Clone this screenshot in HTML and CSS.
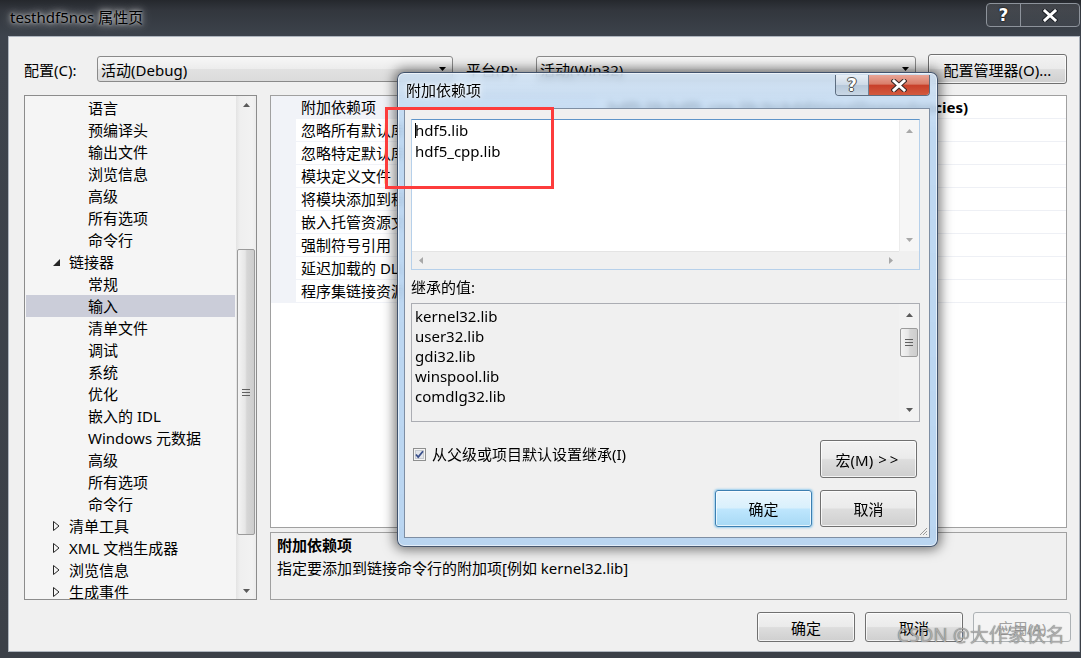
FILE: index.html
```html
<!DOCTYPE html>
<html>
<head>
<meta charset="utf-8">
<link rel="stylesheet" href="styles.css">
</head>
<body>
<div class="win">
  <div class="titlebar">
    <div class="title">testhdf5nos 属性页</div>
    <div class="caps">
      <div class="cap help">?</div>
      <div class="cap close">
        <svg width="16" height="13" viewBox="0 0 16 13"><path d="M3 2 L13 11 M13 2 L3 11" stroke="#1e2228" stroke-width="5" stroke-linecap="square"/><path d="M3 2 L13 11 M13 2 L3 11" stroke="#fff" stroke-width="3" stroke-linecap="square"/></svg>
      </div>
    </div>
  </div>
  <div class="client">
    <div class="cfgrow">
      <span class="lbl">配置(C):</span>
      <div class="combo cfg"><span class="ctext">活动(Debug)</span><svg class="carrow" width="7" height="4" viewBox="0 0 7 4"><path d="M0 0 H7 L3.5 4 Z" fill="#000"/></svg></div>
      <span class="lbl plat">平台(P):</span>
      <div class="combo platc"><span class="ctext">活动(Win32)</span><svg class="carrow" width="7" height="4" viewBox="0 0 7 4"><path d="M0 0 H7 L3.5 4 Z" fill="#000"/></svg></div>
      <div class="btn mgr">配置管理器(O)...</div>
    </div>
    <div class="main">
      <div class="tree">
        <div class="items">
          <div class="item">语言</div>
          <div class="item">预编译头</div>
          <div class="item">输出文件</div>
          <div class="item">浏览信息</div>
          <div class="item">高级</div>
          <div class="item">所有选项</div>
          <div class="item">命令行</div>
          <div class="item parent"><svg class="tri" width="7" height="7" viewBox="0 0 7 7"><path d="M7 0 L7 7 L0 7 Z" fill="#262626"/></svg>链接器</div>
          <div class="item">常规</div>
          <div class="item sel">输入</div>
          <div class="item">清单文件</div>
          <div class="item">调试</div>
          <div class="item">系统</div>
          <div class="item">优化</div>
          <div class="item">嵌入的 IDL</div>
          <div class="item">Windows 元数据</div>
          <div class="item">高级</div>
          <div class="item">所有选项</div>
          <div class="item">命令行</div>
          <div class="item parent"><svg class="tri" width="7" height="10" viewBox="0 0 7 10"><path d="M0.5 0.5 L6 5 L0.5 9.5 Z" fill="none" stroke="#262626"/></svg>清单工具</div>
          <div class="item parent"><svg class="tri" width="7" height="10" viewBox="0 0 7 10"><path d="M0.5 0.5 L6 5 L0.5 9.5 Z" fill="none" stroke="#262626"/></svg>XML 文档生成器</div>
          <div class="item parent"><svg class="tri" width="7" height="10" viewBox="0 0 7 10"><path d="M0.5 0.5 L6 5 L0.5 9.5 Z" fill="none" stroke="#262626"/></svg>浏览信息</div>
          <div class="item parent"><svg class="tri" width="7" height="10" viewBox="0 0 7 10"><path d="M0.5 0.5 L6 5 L0.5 9.5 Z" fill="none" stroke="#262626"/></svg>生成事件</div>
        </div>
        <div class="vs tree-vs">
          <div class="sbb"><svg width="7" height="4" viewBox="0 0 7 4"><path d="M0 4 L3.5 0 L7 4 Z" fill="#5a5a5a"/></svg></div>
          <div class="track">
            <div class="thumb tree-thumb"><span class="grip"></span></div>
          </div>
          <div class="sbb"><svg width="7" height="4" viewBox="0 0 7 4"><path d="M0 0 L7 0 L3.5 4 Z" fill="#5a5a5a"/></svg></div>
        </div>
      </div>
      <div class="right">
        <div class="grid">
          <div class="row first"><span class="m"></span><span class="k">附加依赖项</span><span class="v">hdf5.lib;hdf5_cpp.lib;%(AdditionalDependencies)</span></div>
          <div class="row"><span class="m"></span><span class="k">忽略所有默认库</span><span class="v"></span></div>
          <div class="row"><span class="m"></span><span class="k">忽略特定默认库</span><span class="v"></span></div>
          <div class="row"><span class="m"></span><span class="k">模块定义文件</span><span class="v"></span></div>
          <div class="row"><span class="m"></span><span class="k">将模块添加到程序集</span><span class="v"></span></div>
          <div class="row"><span class="m"></span><span class="k">嵌入托管资源文件</span><span class="v"></span></div>
          <div class="row"><span class="m"></span><span class="k">强制符号引用</span><span class="v"></span></div>
          <div class="row"><span class="m"></span><span class="k">延迟加载的 DLL</span><span class="v"></span></div>
          <div class="row"><span class="m"></span><span class="k">程序集链接资源</span><span class="v"></span></div>
        </div>
        <div class="desc">
          <div class="dtitle">附加依赖项</div>
          <div class="dtext">指定要添加到链接命令行的附加项[例如 kernel32.lib]</div>
        </div>
      </div>
    </div>
    <div class="btnrow">
      <div class="btn bb">确定</div>
      <div class="btn bb">取消</div>
      <div class="btn bb disabled">应用(A)</div>
    </div>
  </div>
</div>

<div class="dlg">
  <div class="dlg-title">
    <span class="t">附加依赖项</span>
    <div class="dcaps">
      <div class="dcap dhelp">?</div>
      <div class="dcap dclose">
        <svg width="16" height="13" viewBox="0 0 16 13"><path d="M3 2 L13 11 M13 2 L3 11" stroke="#3b2a28" stroke-width="5" stroke-linecap="square"/><path d="M3 2 L13 11 M13 2 L3 11" stroke="#fff" stroke-width="3" stroke-linecap="square"/></svg>
      </div>
    </div>
  </div>
  <div class="dlg-client">
    <div class="ta">
      <div class="tatext"><span class="caret"></span>hdf5.lib<br>hdf5_cpp.lib</div>
      <div class="vs ta-vs">
        <div class="sbb2"><svg width="7" height="4" viewBox="0 0 7 4"><path d="M0 4 L3.5 0 L7 4 Z" fill="#a8a8a8"/></svg></div>
        <div class="track"></div>
        <div class="sbb2"><svg width="7" height="4" viewBox="0 0 7 4"><path d="M0 0 L7 0 L3.5 4 Z" fill="#a8a8a8"/></svg></div>
      </div>
      <div class="hs">
        <div class="hsb"><svg width="4" height="7" viewBox="0 0 4 7"><path d="M4 0 L4 7 L0 3.5 Z" fill="#a8a8a8"/></svg></div>
        <div class="track"></div>
        <div class="hsb"><svg width="4" height="7" viewBox="0 0 4 7"><path d="M0 0 L0 7 L4 3.5 Z" fill="#a8a8a8"/></svg></div>
      </div>
      <div class="corner"></div>
    </div>
    <div class="inh">继承的值:</div>
    <div class="list">
      <div class="ltext">kernel32.lib<br>user32.lib<br>gdi32.lib<br>winspool.lib<br>comdlg32.lib</div>
      <div class="vs list-vs">
        <div class="sbb3"><svg width="7" height="4" viewBox="0 0 7 4"><path d="M0 4 L3.5 0 L7 4 Z" fill="#5a5a5a"/></svg></div>
        <div class="track">
          <div class="thumb list-thumb"><span class="grip"></span></div>
        </div>
        <div class="sbb3"><svg width="7" height="4" viewBox="0 0 7 4"><path d="M0 0 L7 0 L3.5 4 Z" fill="#5a5a5a"/></svg></div>
      </div>
    </div>
    <div class="chkrow">
      <div class="chk">
        <svg width="13" height="13" viewBox="0 0 13 13"><rect x="0.5" y="0.5" width="12" height="12" fill="#f4f4f4" stroke="#8e8f8f"/><rect x="2.5" y="2.5" width="8" height="8" fill="#e2e5ea" stroke="#c6cad0"/><path d="M3 6.5 L5.2 9 L10 3.2" fill="none" stroke="#3a4f8a" stroke-width="1.8"/></svg>
        <span>从父级或项目默认设置继承(I)</span>
      </div>
      <div class="btn macro">宏(M) <span class="gg">&gt;&gt;</span></div>
    </div>
    <div class="okrow">
      <div class="btn dbtn focus">确定</div>
      <div class="btn dbtn">取消</div>
    </div>
    <svg class="sizegrip" width="10" height="10" viewBox="0 0 10 10"><path d="M9 2 L2 9 M9 5 L5 9 M9 8 L8 9" stroke="#9a9a9a" stroke-width="1"/></svg>
  </div>
</div>

<div class="redbox"></div>
<div class="wm">CSDN @大作家佚名</div>
</body>
</html>
```
FILE: styles.css
```css
* { box-sizing: border-box; }
html, body { margin: 0; padding: 0; }
body {
  width: 1081px;
  height: 658px;
  overflow: hidden;
  position: relative;
  background: #2f333a;
  font-family: "Noto Sans", "Noto Sans CJK SC", sans-serif;
  font-size: 15px;
  color: #000;
}

.win {
  width: 1081px;
  height: 658px;
  display: flex;
  flex-direction: column;
  background: linear-gradient(180deg, #25282d 0, #32363d 10px, #3d434c 36px, #3b4048 100%);
}

.titlebar {
  height: 36px;
  display: flex;
  justify-content: space-between;
  align-items: flex-start;
  padding-left: 10px;
}
.title {
  line-height: 34px;
  color: #000;
  text-shadow: 0 0 6px rgba(255,255,255,.75), 0 0 12px rgba(255,255,255,.6), 0 0 3px rgba(255,255,255,.5);
}
.caps {
  display: flex;
  margin-top: 3px;
  margin-right: 1px;
  border: 1px solid #8d939b;
  border-radius: 4px;
  overflow: hidden;
  height: 24px;
}
.cap {
  height: 22px;
  display: flex;
  align-items: center;
  justify-content: center;
  color: #fff;
  font-family: "DejaVu Sans", sans-serif;
  font-weight: bold;
  font-size: 17px;
  background: linear-gradient(rgba(255,255,255,.10), rgba(255,255,255,.03));
  text-shadow: 0 0 2px #000, 0 0 1px #000;
}
.cap.help { width: 34px; border-right: 1px solid #8d939b; }
.cap.close { width: 58px; }

.client {
  flex: 1;
  margin: 0 1px 6px 8px;
  border: 1px solid #aeb5be;
  background: #f0f0f0;
  padding: 17px 12px 0 15px;
  display: flex;
  flex-direction: column;
}

.cfgrow {
  display: flex;
  align-items: center;
  height: 30px;
}
.lbl { width: 73px; white-space: nowrap; }
.lbl.plat { width: 70px; margin-left: 13px; }
.combo {
  height: 26px;
  border: 1px solid #8a8a8a;
  border-radius: 3px;
  background: linear-gradient(#f7f7f7, #ececec 50%, #e1e1e1 52%, #dbdbdb);
  display: flex;
  align-items: center;
  padding: 0 6px 0 3px;
}
.ctext { flex: 1; }
.carrow { display: block; }
.cfg { width: 356px; }
.platc { width: 380px; }

.btn {
  border: 1px solid #707070;
  border-radius: 3px;
  background: linear-gradient(#f2f2f2, #ebebeb 48%, #dddddd 52%, #cfcfcf);
  box-shadow: inset 0 0 0 1px rgba(255,255,255,.75);
  display: flex;
  align-items: center;
  justify-content: center;
  color: #000;
  white-space: nowrap;
}
.btn.mgr { width: 139px; height: 30px; margin-left: 12px; }

.main {
  display: flex;
  margin-top: 11px;
  height: 505px;
  gap: 13px;
}

.tree {
  width: 233px;
  border: 1px solid #8c8c8c;
  background: #f5f5f5;
  display: flex;
  overflow: hidden;
}
.items {
  flex: 1;
  padding-top: 1px;
  overflow: hidden;
}
.item {
  height: 22px;
  line-height: 22px;
  padding-left: 63px;
  white-space: nowrap;
}
.item.parent {
  padding-left: 28px;
  display: flex;
  align-items: center;
}
.tri { margin-right: 9px; flex: none; }
.item.sel { background: #cbcdd9; margin: 0 1px; padding-left: 62px; }

.vs {
  width: 20px;
  display: flex;
  flex-direction: column;
  background: linear-gradient(90deg, #e3e3e3, #efefef 20%, #f2f2f2 80%, #ececec);
}
.sbb, .sbb2, .sbb3 {
  height: 17px;
  display: flex;
  align-items: center;
  justify-content: center;
  flex: none;
}
.track { flex: 1; }
.thumb {
  margin: 0 1px;
  border: 1px solid #9b9b9b;
  border-radius: 2px;
  background: linear-gradient(90deg, #f4f4f4, #e6e6e6 45%, #d6d6d6 55%, #cdcdcd);
  display: flex;
  align-items: center;
  justify-content: center;
}
.grip {
  width: 8px;
  height: 7px;
  border-top: 1px solid #606060;
  border-bottom: 1px solid #606060;
  background: linear-gradient(transparent 2px, #606060 2px, #606060 3px, transparent 3px);
}
.tree-thumb { margin-top: 136px; height: 286px; }

.right {
  width: 797px;
  display: flex;
  flex-direction: column;
  gap: 4px;
}
.grid {
  height: 433px;
  border: 1px solid #a0a0a0;
  background: #fff;
}
.row {
  display: flex;
  height: 23px;
  line-height: 22px;
  white-space: nowrap;
}
.row .m { width: 25px; background: #f1f3f8; flex: none; }
.row .k {
  width: 300px;
  flex: none;
  padding-left: 5px;
  background: #fff;
  border-bottom: 1px solid #f1f3f8;
  overflow: hidden;
}
.row.first .k { background: #f1f3f8; }
.row .v {
  flex: 1;
  padding-left: 12px;
  font-weight: bold;
  font-size: 15px;
  border-bottom: 1px solid #eef0f5;
  overflow: hidden;
}
.desc {
  height: 68px;
  border: 1px solid #a0a0a0;
  background: #f0f0f0;
  padding: 1px 6px;
}
.dtitle { font-weight: bold; line-height: 22px; }
.dtext { line-height: 22px; margin-top: 1px; }

.btnrow {
  display: flex;
  justify-content: flex-end;
  margin-top: 12px;
  margin-right: -4px;
  gap: 10px;
}
.btn.bb { width: 98px; height: 30px; }
.btn.disabled {
  border-color: #adb2b5;
  background: #f4f4f4;
  color: #a2a2a2;
  box-shadow: none;
}

/* dialog */
.dlg {
  position: absolute;
  left: 397px;
  top: 72px;
  width: 541px;
  height: 475px;
  padding: 0 7px 8px 6px;
  border: 1px solid rgba(35, 50, 75, .8);
  border-radius: 7px;
  background: linear-gradient(rgba(200, 222, 244, .72), rgba(184, 212, 240, .9) 60px, rgba(182, 211, 240, .95));
  backdrop-filter: blur(3px);
  box-shadow: 0 0 12px 3px rgba(0,0,0,.5), inset 0 0 0 1px rgba(255,255,255,.6);
  display: flex;
  flex-direction: column;
}
.dlg-title {
  height: 35px;
  display: flex;
  justify-content: space-between;
  align-items: flex-start;
  flex: none;
}
.dlg-title .t {
  line-height: 34px;
  padding-left: 2px;
  text-shadow: 0 0 6px rgba(255,255,255,.9), 0 0 3px rgba(255,255,255,.8);
}
.dcaps {
  display: flex;
  margin-top: 2px;
  height: 21px;
  border: 1px solid #5d6d80;
  border-top: none;
  border-radius: 0 0 4px 4px;
  overflow: hidden;
}
.dcap {
  height: 20px;
  display: flex;
  align-items: center;
  justify-content: center;
}
.dhelp {
  width: 33px;
  border-right: 1px solid #6f7f92;
  background: linear-gradient(#e7eef6, #cdd9e6 50%, #b7c8da 52%, #c9d7e5);
  color: #fff;
  font-family: "DejaVu Sans", sans-serif;
  font-weight: bold;
  font-size: 17px;
  text-shadow: 0 0 1px #333, 1px 0 0 #555, -1px 0 0 #555, 0 1px 0 #555, 0 -1px 0 #555;
}
.dclose {
  width: 60px;
  background: linear-gradient(#e9a597, #d97e6a 45%, #c8402a 52%, #d35a3e);
}

.dlg-client {
  flex: 1;
  position: relative;
  border: 1px solid #7e8ea3;
  background: #f0f0f0;
  padding: 10px 9px 0 6px;
  display: flex;
  flex-direction: column;
}
.ta {
  height: 151px;
  border: 1px solid #b6d0ea;
  border-top-color: #5f95c9;
  background: #fff;
  display: grid;
  grid-template-columns: 1fr 20px;
  grid-template-rows: 1fr 18px;
}
.tatext {
  padding: 0 3px;
  line-height: 21px;
  position: relative;
}
.caret {
  display: inline-block;
  width: 1px;
  height: 15px;
  background: #000;
  vertical-align: -2px;
  margin-right: -1px;
}
.ta-vs { background: #f6f6f6; border-left: 1px solid #ececec; }
.sbb2 { height: 22px; }
.hs {
  display: flex;
  background: #f0f0f0;
  border-top: 1px solid #e4e4e4;
}
.hsb {
  width: 17px;
  display: flex;
  align-items: center;
  justify-content: center;
}
.hs .track { flex: 1; }
.corner { background: #f0f0f0; }

.inh { margin-top: 7px; line-height: 20px; }
.list {
  margin-top: 6px;
  height: 119px;
  border: 1px solid #abadb3;
  background: #f0f0f0;
  display: flex;
}
.ltext {
  flex: 1;
  padding: 2px 3px 0;
  line-height: 20px;
}
.list-vs { width: 20px; background: #f2f2f2; }
.sbb3 { height: 22px; }
.list-thumb { margin-top: 2px; height: 29px; }

.chkrow {
  display: flex;
  justify-content: space-between;
  align-items: flex-start;
  margin-top: 18px;
}
.chk {
  display: flex;
  align-items: center;
  margin-top: 6px;
  margin-left: 2px;
  gap: 6px;
  line-height: 16px;
}
.chk svg { display: block; }
.btn.macro { width: 97px; height: 38px; margin-right: 3px; }
.gg { letter-spacing: 3px; margin-left: 5px; }
.okrow {
  display: flex;
  justify-content: flex-end;
  gap: 8px;
  margin-top: 12px;
  margin-right: 3px;
}
.btn.dbtn { width: 97px; height: 37px; }
.btn.focus {
  border-color: #3c7fb1;
  background: linear-gradient(#eaf6fd, #d9f0fc 48%, #bee6fd 52%, #a7d9f5);
  box-shadow: 0 0 2px 1px rgba(90, 180, 235, .6), inset 0 0 0 1px rgba(255,255,255,.7);
}
.sizegrip {
  position: absolute;
  right: 1px;
  bottom: 1px;
}

.redbox {
  position: absolute;
  left: 385px;
  top: 107px;
  width: 169px;
  height: 82px;
  border: 3px solid #fd3c3c;
}
.wm {
  position: absolute;
  left: 897px;
  top: 623px;
  font-size: 19px;
  line-height: 24px;
  color: rgba(178, 178, 178, .92);
  text-shadow: 0 0 1px rgba(40,40,40,.7);
  white-space: nowrap;
}
```
